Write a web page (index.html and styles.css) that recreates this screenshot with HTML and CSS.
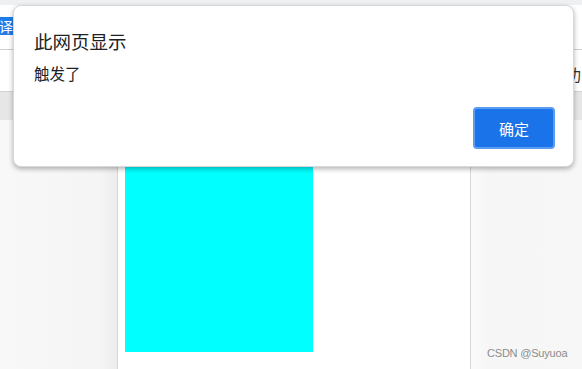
FILE: index.html
```html
<!DOCTYPE html>
<html lang="zh-CN">
<head>
<meta charset="utf-8">
<title>此网页显示</title>
<link rel="stylesheet" href="styles.css">
</head>
<body>
<div class="browser">
  <div class="topstrip"></div>
  <div class="bar1"><span class="badge">翻译</span></div>
  <div class="bar2"><span class="cut">功</span></div>
  <div class="band"></div>
  <div class="main">
    <div class="gutter-left"></div>
    <div class="page">
      <div class="cyan"></div>
    </div>
    <div class="gutter-right"></div>
  </div>
</div>
<div class="watermark">CSDN @Suyuoa</div>
<div class="dialog">
  <div class="title">此网页显示</div>
  <div class="message">触发了</div>
  <div class="actions"><button class="ok">确定</button></div>
</div>
</body>
</html>
```
FILE: styles.css
```css
html, body {
  margin: 0;
  padding: 0;
  width: 582px;
  height: 369px;
  overflow: hidden;
  font-family: "Noto Sans CJK SC", "Noto Sans", sans-serif;
}
.browser {
  width: 582px;
  height: 369px;
  display: flex;
  flex-direction: column;
  background: #ffffff;
}
.topstrip {
  height: 5px;
  background: #eff0f1;
}
.bar1 {
  height: 45px;
  box-sizing: border-box;
  border-bottom: 1px solid #cfcfcf;
  display: flex;
  align-items: flex-start;
  overflow: hidden;
}
.badge {
  margin-top: 12px;
  margin-left: -16px;
  height: 18px;
  line-height: 18px;
  padding: 0 1px;
  background: #1f7ce8;
  color: #ffffff;
  font-size: 14px;
}
.bar2 {
  height: 42px;
  box-sizing: border-box;
  border-bottom: 1px solid #d3d3d3;
  display: flex;
  justify-content: flex-end;
  align-items: center;
  overflow: hidden;
}
.cut {
  font-size: 16px;
  color: #333;
  margin-right: 1px;
  margin-top: 6px;
}
.band {
  height: 28px;
  background: #e6e6e6;
}
.main {
  flex: 1;
  display: flex;
}
.gutter-left {
  width: 117px;
  background: linear-gradient(to right, #f8f8f8 0%, #f5f5f5 85%, #ececec 100%);
}
.page {
  background: #ffffff;
  border-left: 1px solid #d6d6d6;
  border-right: 1px solid #d6d6d6;
  padding: 9px 0 0 7px;
  box-sizing: border-box;
  width: 354px;
}
.cyan {
  width: 188px;
  height: 223px;
  background: #00ffff;
}
.gutter-right {
  flex: 1;
  background: linear-gradient(to right, #fbfbfb 0px, #f6f6f6 18px, #f7f7f7 100%);
}
.watermark {
  position: absolute;
  left: 487px;
  top: 347px;
  font-family: "Liberation Sans", Arial, sans-serif;
  font-size: 11px;
  color: #8c8c8c;
  letter-spacing: -0.2px;
}
.dialog {
  position: absolute;
  left: 13px;
  top: 5px;
  width: 561px;
  height: 162px;
  box-sizing: border-box;
  background: #ffffff;
  border-radius: 8px;
  border: 1px solid #d8d8d8;
  box-shadow: 0 2px 5px rgba(0, 0, 0, 0.3);
  padding: 22px 18px 0 20px;
  display: flex;
  flex-direction: column;
}
.title {
  font-size: 18.5px;
  line-height: 26px;
  color: #202124;
}
.message {
  margin-top: 8px;
  font-size: 15.5px;
  line-height: 22px;
  color: #202124;
}
.actions {
  display: flex;
  justify-content: flex-end;
  margin-top: 23px;
}
.ok {
  width: 82px;
  height: 42px;
  box-sizing: border-box;
  background: #1a73e8;
  border: 2px solid #5a9cf0;
  border-radius: 4px;
  color: #ffffff;
  font-family: "Noto Sans CJK SC", sans-serif;
  font-size: 15px;
  padding: 0;
}
```
